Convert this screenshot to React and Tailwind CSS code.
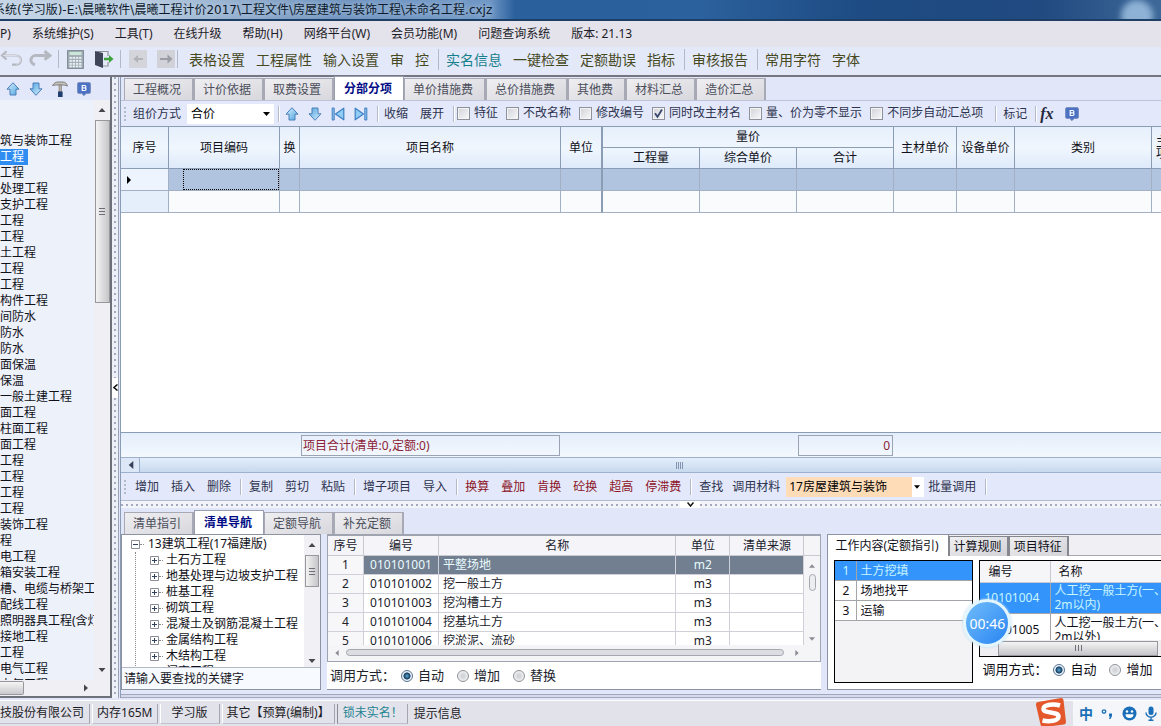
import React from "react";

const TREE = [
  "筑与装饰工程", "工程", "工程", "处理工程", "支护工程", "工程", "工程", "土工程", "工程", "工程",
  "构件工程", "间防水", "防水", "防水", "面保温", "保温", "一般土建工程", "面工程", "柱面工程", "面工程",
  "工程", "工程", "工程", "工程", "装饰工程", "程", "电工程", "箱安装工程", "槽、电缆与桥架工程", "配线工程",
  "照明器具工程(含灯", "接地工程", "工程", "电气工程", "电气工程",
];

const NAV = ["土石方工程", "地基处理与边坡支护工程", "桩基工程", "砌筑工程", "混凝土及钢筋混凝土工程", "金属结构工程", "木结构工程", "门窗工程"];

const LIST = [
  ["1", "010101001", "平整场地", "m2"],
  ["2", "010101002", "挖一般土方", "m3"],
  ["3", "010101003", "挖沟槽土方", "m3"],
  ["4", "010101004", "挖基坑土方", "m3"],
  ["5", "010101006", "挖淤泥、流砂", "m3"],
];

function Sep() {
  return <span className="h-4 w-px shrink-0 bg-[#b4b9c9] shadow-[1px_0_0_#ffffff]" />;
}

function Grip() {
  return (
    <span className="flex shrink-0 flex-col gap-0.5">
      <i className="size-0.5 bg-[#b3b9cd]" />
      <i className="size-0.5 bg-[#b3b9cd]" />
      <i className="size-0.5 bg-[#b3b9cd]" />
      <i className="size-0.5 bg-[#b3b9cd]" />
    </span>
  );
}

function BlueArrow({ down }) {
  return (
    <svg viewBox="0 0 14 14" className={down ? "size-3.5 rotate-180" : "size-3.5"}>
      <defs>
        <linearGradient id="arrowFill" x1="0" y1="0" x2="1" y2="1">
          <stop offset="0" stopColor="#d8f0fd" />
          <stop offset="1" stopColor="#4fa3e0" />
        </linearGradient>
      </defs>
      <path d="M7 .7 13 7.2H10V13H4V7.2H1Z" fill="url(#arrowFill)" stroke="#4b7fb9" strokeWidth="1" strokeLinejoin="round" />
    </svg>
  );
}

function BlueEnd({ right }) {
  return (
    <svg viewBox="0 0 14 14" className={right ? "size-3.5 rotate-180" : "size-3.5"}>
      <path d="M12.8 1.2V12.8L4.5 7Z" fill="#8fcdf4" stroke="#3d7fc2" strokeWidth="1.2" strokeLinejoin="round" />
      <path d="M1.2 1h2v12h-2z" fill="#8fc6ee" stroke="#3d7fc2" strokeWidth="1" />
    </svg>
  );
}

function BadgeB() {
  return (
    <svg viewBox="0 0 14 14" className="size-3.5">
      <path d="M1.5.7h11a.8.8 0 0 1 .8.8v9a.8.8 0 0 1-.8.8H9.3L7 13.6 4.7 11.3H1.5a.8.8 0 0 1-.8-.8v-9a.8.8 0 0 1 .8-.8Z" fill="#4a72c4" stroke="#6d83b8" />
      <path d="M5.2 3.5h2.4a1.2 1.2 0 0 1 .2 2.4 1.3 1.3 0 0 1-.1 2.6H5.2Zm0 2.4h2.4" fill="none" stroke="#fff" strokeWidth="1.2" />
    </svg>
  );
}

function Caret({ className }) {
  return (
    <svg viewBox="0 0 7 4" className={className}>
      <path d="M0 0h7L3.5 4Z" fill="currentColor" />
    </svg>
  );
}

function Tabs({ items, active, label }) {
  return (
    <div role="tablist" aria-label={label} className="flex items-end pl-[3px] text-[12px]">
      {items.map((t) =>
        t === active ? (
          <button key={t} role="tab" aria-selected="true" className="h-6 border border-b-0 border-[#9a9fb0] bg-white pr-[11px] pl-[9px] font-bold text-[#000b85]">
            {t}
          </button>
        ) : (
          <button key={t} role="tab" aria-selected="false" className="h-[22px] border border-r-2 border-b-0 border-[#a7a9b4] bg-linear-to-br from-[#efeff2] to-[#d7d7dd] pr-[11px] pl-2 text-[#4b4e5a]">
            {t}
          </button>
        )
      )}
    </div>
  );
}

function Check({ children, checked }) {
  return (
    <label className="flex items-center gap-1">
      <input
        type="checkbox"
        defaultChecked={checked}
        className="peer size-[13px] appearance-none border border-[#8d929c] bg-linear-to-br from-[#cfd2d9] to-[#fafafa] shadow-[inset_0_0_0_1px_#f4f4f4]"
      />
      <svg viewBox="0 0 13 13" className="-ml-[17px] hidden size-[13px] peer-checked:block">
        <path d="M3 6.2 5.5 9.8 10 2.6" fill="none" stroke="#3b4a70" strokeWidth="1.8" />
      </svg>
      <span className="-mt-0.5">{children}</span>
    </label>
  );
}

function Radio({ name, children, checked }) {
  return (
    <label className="flex items-center gap-[5px]">
      <input
        type="radio"
        name={name}
        defaultChecked={checked}
        className="size-3 appearance-none rounded-full border border-[#8e9199] bg-[radial-gradient(circle,#d2d4d8_20%,#f6f6f6_80%)] checked:border-[#587490] checked:bg-[radial-gradient(circle,#5fa8cf_0%,#123a60_45%,#eaf3fa_55%)]"
      />
      {children}
    </label>
  );
}

function TitleBar() {
  return (
    <header className="relative flex h-[21px] shrink-0 items-center overflow-hidden border-b-2 border-[#1d3f66] bg-[linear-gradient(90deg,#c5d5e6_0px,#b4c8dd_150px,#6f93be_330px,#6f97c5_490px,#2a609c_515px,#2b619d_700px,#1e4b83_860px,#204a80_1040px,#3d6898_100%)]">
      <h1 className="-ml-[7px] font-['DejaVu_Sans','Noto_Sans_CJK_SC',sans-serif] text-[12px] leading-[18px] whitespace-nowrap text-[#0d1a2c] [text-shadow:0_0_6px_#d3e2f2]">
        系统(学习版)-E:\晨曦软件\晨曦工程计价2017\工程文件\房屋建筑与装饰工程\未命名工程.cxjz
      </h1>
      <span className="absolute top-0 right-2 size-8 rounded-full bg-[#a4c6e6] opacity-80 blur-[3px]" />
    </header>
  );
}

function MenuBar() {
  const items = ["P)", "系统维护(S)", "工具(T)", "在线升级", "帮助(H)", "网络平台(W)", "会员功能(M)", "问题查询系统", "版本: 21.13"];
  return (
    <nav className="flex h-[26px] shrink-0 items-center gap-[21px] overflow-hidden bg-[#e4e2eb] text-[12px] text-[#1d1d28]">
      {items.map((m) => (
        <button key={m} className="shrink-0 whitespace-nowrap">{m}</button>
      ))}
    </nav>
  );
}

function MainToolbar() {
  return (
    <div role="toolbar" className="flex h-[30px] shrink-0 items-center gap-[11px] overflow-hidden border-b-2 border-[#75767f] bg-[#e4e9fa] pb-1 text-[14px] whitespace-nowrap text-[#47491f]">
      <div className="flex w-[178px] shrink-0 items-center">
        <button aria-label="撤销" className="mr-1">
          <svg viewBox="0 0 24 18" className="h-[18px] w-6">
            <path d="M2 5.5h14a5 4.6 0 0 1 0 9.2h-4M6.5 1.2 2 5.5l4.5 4" fill="none" stroke="#b5b8c0" strokeWidth="2.2" />
            <path d="M3 5.5h13a4.6 4.2 0 0 1 0 8.6" fill="none" stroke="#e7e9ee" strokeWidth=".8" />
          </svg>
        </button>
        <button aria-label="重做">
          <svg viewBox="0 0 24 18" className="h-[18px] w-6">
            <path d="M22 5.5H9a5 4.6 0 0 0-2 9.2M16.5 1.2 22 5.5l-5.5 4" fill="none" stroke="#b5b8c0" strokeWidth="3" />
          </svg>
        </button>
        <span className="mr-2 ml-1.5 h-[18px] w-px bg-[#b4b9c9]" />
        <button aria-label="计算器">
          <svg viewBox="0 0 17 19" className="h-[19px] w-[17px]">
            <rect x=".6" y=".6" width="15.8" height="17.8" fill="#a3adb5" stroke="#7c8893" />
            <rect x="2.5" y="2" width="12" height="3" fill="#c9e6d6" />
            <g fill="#e8f0f3">
              {[7, 10, 13, 15.5].map((y) => [2.5, 5.7, 8.9, 12.1].map((x) => <rect key={`${x}-${y}`} x={x} y={y} width="2.3" height="1.8" />))}
            </g>
          </svg>
        </button>
        <button aria-label="退出" className="ml-2.5">
          <svg viewBox="0 0 20 18" className="h-[18px] w-5">
            <path d="M3 1.5h11V6M14 12v4H9" fill="#eceef3" stroke="#8d93a1" strokeWidth="1.2" />
            <path d="M1 1 9 3v15l-8-3Z" fill="#3f4659" />
            <path d="M10 7.7h5V5l4.5 4-4.5 4v-2.7h-5Z" fill="#3da23d" />
          </svg>
        </button>
        <span className="mr-2 ml-1.5 h-[18px] w-px bg-[#b4b9c9]" />
        <button aria-label="后退">
          <svg viewBox="0 0 18 18" className="size-[18px]">
            <path d="M0 0h18v18H0z" fill="#d3d5da" />
            <path d="M5 9h9" stroke="#b0b3ba" strokeWidth="2" />
            <path d="M9 5 4.500 9 9 13Z" fill="#b0b3ba" />
          </svg>
        </button>
        <button aria-label="前进" className="ml-2.5">
          <svg viewBox="0 0 18 18" className="size-[18px]">
            <path d="M0 0h18v18H0z" fill="#d0d2d7" />
            <path d="M3 9h10" stroke="#9a9da5" strokeWidth="2" />
            <path d="M10.500 4.500 15.500 9l-5 4.500Z" fill="#9a9da5" />
          </svg>
        </button>
        <span className="ml-auto h-[18px] w-px bg-[#b4b9c9]" />
      </div>
      <div className="flex gap-[11px] pr-[9px]">
        <button>表格设置</button>
        <button>工程属性</button>
        <button>输入设置</button>
        <button>审</button>
        <button>控</button>
      </div>
      <div className="-ml-[11px] flex items-center gap-[11px] border-l border-[#b4b9c9] pr-[9px] pl-[7px]">
        <button className="text-[#16808c]">实名信息</button>
        <button>一键检查</button>
        <button>定额勘误</button>
        <button>指标</button>
      </div>
      <div className="-ml-[11px] border-l border-[#b4b9c9] pr-[9px] pl-[7px]">
        <button>审核报告</button>
      </div>
      <div className="-ml-[11px] flex gap-[11px] border-l border-[#b4b9c9] pl-[7px]">
        <button>常用字符</button>
        <button>字体</button>
      </div>
    </div>
  );
}

function LeftPanel() {
  return (
    <aside className="flex w-28 shrink-0 flex-col overflow-hidden border-r-2 border-b-2 border-[#6e7079] bg-[#edf1fa]">
      <div className="flex h-[23px] shrink-0 items-center gap-[9px] bg-[#e2e8f9] pl-1.5">
        <button aria-label="上移"><BlueArrow /></button>
        <button aria-label="下移"><BlueArrow down /></button>
        <button aria-label="工具">
          <svg viewBox="0 0 16 16" className="size-4">
            <path d="M.5 4.5C2 2 4 1 6 1h5c2 0 3.500 1 4.500 4L12 4H5C3.500 4 2.500 4.200.5 4.500Z" fill="#c5c3c0" stroke="#6f6b69" strokeWidth=".8" />
            <path d="M7 4h2.500v7H7Z" fill="#b9b2aa" stroke="#6b6259" strokeWidth=".5" />
            <path d="M6 10.500h4.600V16H6Z" fill="#1f3d70" />
          </svg>
        </button>
        <button aria-label="标注"><BadgeB /></button>
      </div>
      <div className="flex min-h-0 flex-1">
        <ul className="min-w-0 flex-1 overflow-hidden pt-[33px] text-[12px] leading-4 whitespace-nowrap text-[#101018]">
          {TREE.map((t, i) => (
            <li key={i} className="h-4">
              {i === 1 ? <span className="inline-block bg-[#2f8df2] pr-1 text-white">{t}</span> : t}
            </li>
          ))}
        </ul>
        <div className="flex w-4 shrink-0 flex-col items-center bg-[#f0eff3] text-[#44454d]">
          <Caret className="my-2 h-1 w-2 shrink-0 rotate-180" />
          <div className="flex h-[183px] w-[15px] flex-col items-center justify-center gap-0.5 border border-[#97979c] bg-linear-to-r from-[#f3f3f3] to-[#c6c6ca]">
            <i className="h-px w-1.5 bg-[#6d6e75]" /><i className="h-px w-1.5 bg-[#6d6e75]" /><i className="h-px w-1.5 bg-[#6d6e75]" />
          </div>
          <Caret className="mt-auto mb-2 h-1 w-2" />
        </div>
      </div>
      <div className="flex h-4 shrink-0 items-center bg-[#f0eff3] text-[#44454d]">
        <span className="h-[14px] w-6 rounded-r-xs border border-l-0 border-[#97979c] bg-linear-to-b from-[#f5f5f5] to-[#c9c9cd]" />
        <Caret className="ml-auto mr-5 h-1 w-2 -rotate-90" />
      </div>
    </aside>
  );
}

function Splitter() {
  return (
    <div className="flex w-[7px] shrink-0 flex-col items-center border-r border-[#9ba3bb] bg-[#eef0f8]">
      <span className="w-0.5 flex-1 bg-[repeating-linear-gradient(180deg,#a3aac0_0_2px,transparent_2px_6px)]" />
      <button aria-label="收起" className="flex h-5 w-full items-center justify-center bg-white">
        <svg viewBox="0 0 5 7" className="h-[7px] w-[5px]"><path d="M4.500.5 1 3.500l3.500 3" fill="none" stroke="#111" strokeWidth="1.500" /></svg>
      </button>
      <span className="w-0.5 flex-1 bg-[repeating-linear-gradient(180deg,#a3aac0_0_2px,transparent_2px_6px)]" />
    </div>
  );
}

function GridToolbar() {
  return (
    <div role="toolbar" className="flex h-[26px] shrink-0 items-center overflow-hidden border-t border-[#bcc3d8] bg-[#e3e9fa] pl-[3px] text-[12px] whitespace-nowrap text-[#2e3350] *:shrink-0">
      <Grip />
      <label htmlFor="mode" className="ml-[7px]">组价方式</label>
      <span className="relative mr-1 ml-1.5 block h-5 w-[87px]">
        <select id="mode" className="size-full appearance-none bg-white pl-1 text-[12px] text-black"><option>合价</option></select>
        <Caret className="pointer-events-none absolute top-2 right-1 h-1 w-[7px] text-black" />
      </span>
      <Sep />
      <div className="mx-1.5 flex gap-[9px] pr-[3px]">
        <button aria-label="上移"><BlueArrow /></button>
        <button aria-label="下移"><BlueArrow down /></button>
        <button aria-label="首条"><BlueEnd /></button>
        <button aria-label="末条"><BlueEnd right /></button>
      </div>
      <Sep />
      <div className="flex gap-3 pr-[9px] pl-1.5"><button>收缩</button><button>展开</button></div>
      <Sep />
      <div className="mr-3 ml-[3px] flex gap-2">
        <Check>特征</Check>
        <Check>不改名称</Check>
        <Check>修改编号</Check>
        <Check checked>同时改主材名</Check>
        <Check>量、价为零不显示</Check>
        <Check>不同步自动汇总项</Check>
      </div>
      <Sep />
      <button className="mr-2 ml-[7px]">标记</button>
      <Sep />
      <button className="mx-1 font-['Liberation_Serif',serif] text-[16px] font-bold text-[#26283c] italic">fx</button>
      <button aria-label="标注" className="ml-2"><BadgeB /></button>
    </div>
  );
}

function MainGrid() {
  const th = "border-r border-b border-[#8b9cb5] p-0 font-normal";
  const cells = Array.from({ length: 11 });
  return (
    <section className="flex min-h-0 flex-1 flex-col overflow-hidden border-t border-[#8b9cb5] bg-white">
      <div className="min-h-0 flex-1 overflow-hidden">
        <table className="w-max min-w-full table-fixed border-separate border-spacing-0 text-center text-[12px] text-[#101018]">
          <colgroup>
            <col className="w-12" /><col className="w-[111px]" /><col className="w-5" /><col className="w-[261px]" />
            <col className="w-[42px]" /><col className="w-[97px]" /><col className="w-[97px]" /><col className="w-[97px]" />
            <col className="w-[63px]" /><col className="w-[58px]" /><col className="w-[137px]" /><col className="w-10" />
          </colgroup>
          <thead className="bg-linear-to-b from-[#e6effb] via-[#f0f6fe] to-[#dde9fa]">
            <tr className="h-[21px]">
              <th rowSpan={2} className={th}>序号</th>
              <th rowSpan={2} className={th}>项目编码</th>
              <th rowSpan={2} className={th}>换</th>
              <th rowSpan={2} className={th}>项目名称</th>
              <th rowSpan={2} className="border-r-2 border-b border-[#8b9cb5] p-0 font-normal">单位</th>
              <th colSpan={3} className={th}>量价</th>
              <th rowSpan={2} className={th}>主材单价</th>
              <th rowSpan={2} className={th}>设备单价</th>
              <th rowSpan={2} className={th}>类别</th>
              <th rowSpan={2} className="border-b border-[#8b9cb5] p-0 pl-1 text-left leading-3 font-normal">主要<br />项目</th>
            </tr>
            <tr className="h-[21px]">
              <th className={th}>工程量</th>
              <th className={th}>综合单价</th>
              <th className={th}>合计</th>
            </tr>
          </thead>
          <tbody>
            <tr className="h-[22px] bg-[#b0c4e0]">
              <td className="border-r border-b border-[#a3b0c4] bg-[#edf4fe] p-0 pl-1.5">
                <svg viewBox="0 0 4 8" className="h-2 w-1"><path d="M0 0 4 4 0 8Z" fill="#000" /></svg>
              </td>
              {cells.map((_, i) => (
                <td key={i} className={i === 3 ? "border-r-2 border-b border-r-[#8b9cb5] border-b-[#a3b0c4] p-0" : "border-r border-b border-[#a3b0c4] p-0"}>
                  {i === 0 && <span className="ml-[14px] block h-[21px] border border-dotted border-black" />}
                </td>
              ))}
            </tr>
            <tr className="h-[22px] bg-[#fafbfd]">
              <td className="border-r border-b border-[#a3b0c4] bg-[#e5effc] p-0" />
              {cells.map((_, i) => (
                <td key={i} className={i === 3 ? "border-r-2 border-b border-r-[#8b9cb5] border-b-[#a3b0c4] p-0" : "border-r border-b border-[#a3b0c4] p-0"} />
              ))}
            </tr>
          </tbody>
        </table>
      </div>
      <div className="flex h-[25px] shrink-0 items-center border-t border-[#8b9cb5] bg-linear-to-b from-[#e4eefb] to-[#f4f8fe] pl-[180px] text-[12px] text-[#8c2435]">
        <output className="h-[21px] w-[259px] shrink-0 border border-[#9aa3b4] pl-px leading-[19px]">项目合计(清单:0,定额:0)</output>
        <output className="ml-[238px] h-[21px] w-[95px] shrink-0 border border-[#9aa3b4] pr-0.5 text-right leading-[19px]">0</output>
      </div>
      <div className="flex h-4 shrink-0 items-center border-y border-[#9db0cd] bg-[#dce8f8] text-[#37425a]">
        <Caret className="mr-1 ml-1.5 h-1.5 w-2 rotate-90" />
        <div className="flex h-full flex-1 items-center justify-center gap-px border-l border-[#9db0cd] bg-linear-to-b from-[#e3eefb] to-[#c8d9ef] pl-[58px]">
          <i className="h-[7px] w-px bg-[#8293ae]" /><i className="h-[7px] w-px bg-[#8293ae]" /><i className="h-[7px] w-px bg-[#8293ae]" /><i className="h-[7px] w-px bg-[#8293ae]" />
        </div>
      </div>
    </section>
  );
}

function EditToolbar() {
  return (
    <div role="toolbar" className="flex h-[27px] shrink-0 items-center overflow-hidden bg-[#e3e9fa] pl-[3px] text-[12px] whitespace-nowrap text-[#2e3350] *:shrink-0">
      <Grip />
      <div className="flex gap-3 px-[9px]"><button>增加</button><button>插入</button><button>删除</button></div>
      <Sep />
      <div className="flex gap-3 pr-[9px] pl-2"><button>复制</button><button>剪切</button><button>粘贴</button></div>
      <Sep />
      <div className="flex gap-3 pr-[9px] pl-2"><button>增子项目</button><button>导入</button></div>
      <Sep />
      <div className="flex gap-3 pr-[9px] pl-2 text-[#8d1528]">
        <button>换算</button><button>叠加</button><button>肯换</button><button>砼换</button><button>超高</button><button>停滞费</button>
      </div>
      <Sep />
      <div className="flex gap-[9px] pr-1.5 pl-2"><button>查找</button><button>调用材料</button></div>
      <span className="relative block h-5 w-[138px]">
        <select aria-label="定额库" className="size-full appearance-none border-r-12 border-white bg-[#ffdcb8] pl-[3px] text-[12px] text-black"><option>17房屋建筑与装饰</option></select>
        <Caret className="pointer-events-none absolute top-2 right-1 h-1 w-1.5 text-black" />
      </span>
      <button className="mr-[9px] ml-1">批量调用</button>
      <Sep />
    </div>
  );
}

function HSplitter() {
  return (
    <div className="flex h-2 shrink-0 items-center border-t border-[#b4bbcf] bg-[#f3f4fa]">
      <span className="h-0.5 flex-1 bg-[repeating-linear-gradient(90deg,#a3aac0_0_2px,transparent_2px_5px)]" />
      <button aria-label="收起" className="flex h-full w-5 items-center justify-center bg-white">
        <svg viewBox="0 0 7 5" className="h-[5px] w-[7px]"><path d="M.5.5 3.500 4l3-3.500" fill="none" stroke="#111" strokeWidth="1.500" /></svg>
      </button>
      <span className="h-0.5 w-[461px] bg-[repeating-linear-gradient(90deg,#a3aac0_0_2px,transparent_2px_5px)]" />
    </div>
  );
}

function Expander({ open }) {
  return (
    <svg viewBox="0 0 9 9" className="size-[9px] shrink-0">
      <path d="M.5.5h8v8h-8z" fill="#fff" stroke="#8b8e96" />
      <path d={open ? "M2 4.500h5" : "M2 4.500h5M4.500 2v5"} stroke="#30405c" />
    </svg>
  );
}

function NavTree() {
  return (
    <section className="flex w-[200px] shrink-0 flex-col border border-[#8e93a3] bg-white">
      <div className="flex min-h-0 flex-1">
        <div className="min-w-0 flex-1 overflow-hidden pt-px pl-[9px] text-[12px] leading-4 whitespace-nowrap text-[#101018]">
          <div className="flex h-4 items-center"><Expander open /><i className="mr-1 w-1 border-t border-dotted border-[#888]" />13建筑工程(17福建版)</div>
          <ul className="ml-1 border-l border-dotted border-[#888] pl-[14px]">
            {NAV.map((n) => (
              <li key={n} className="flex h-4 items-center"><Expander /><i className="mr-[3px] w-1 border-t border-dotted border-[#888]" />{n}</li>
            ))}
          </ul>
        </div>
        <div className="flex w-4 shrink-0 flex-col items-center bg-[#f1f0f4] text-[#44454d]">
          <Caret className="my-2 h-1 w-2 shrink-0 rotate-180" />
          <div className="flex h-8 w-[14px] shrink-0 flex-col items-center justify-center gap-0.5 border border-[#97979c] bg-linear-to-r from-[#f3f3f3] to-[#c6c6ca]">
            <i className="h-px w-1.5 bg-[#6d6e75]" /><i className="h-px w-1.5 bg-[#6d6e75]" /><i className="h-px w-1.5 bg-[#6d6e75]" />
          </div>
          <Caret className="mt-auto mb-1 h-1 w-2" />
        </div>
      </div>
      <input aria-label="查找" placeholder="请输入要查找的关键字" className="h-[22px] w-full shrink-0 border-t border-[#b4b9c8] bg-[#f7faff] px-0.5 text-[12px] placeholder:text-[#16161e]" />
    </section>
  );
}

function ListPanel() {
  const th = "border-r border-b border-[#c9c9d2] p-0 font-normal";
  const td = "border-r border-b border-[#cfd0d8] p-0";
  return (
    <section className="flex min-w-0 flex-[495] flex-col border-b border-[#8e93a3] bg-white text-[12px] text-[#20222c]">
      <div className="flex h-32 shrink-0 flex-col border border-t-2 border-[#a0a3b0] bg-[#f5f5f8]">
        <div className="min-h-0 flex-1 overflow-hidden">
          <div className="flex">
            <table className="min-w-0 flex-1 table-fixed border-separate border-spacing-0 bg-white text-center">
              <colgroup><col className="w-9" /><col className="w-[75px]" /><col /><col className="w-[54px]" /><col className="w-[74px]" /></colgroup>
              <thead className="bg-[#f5f4f8]">
                <tr className="h-5"><th className={th}>序号</th><th className={th}>编号</th><th className={th}>名称</th><th className={th}>单位</th><th className={th}>清单来源</th></tr>
              </thead>
              <tbody>
                {LIST.map((r, i) => (
                  <tr key={r[0]} className={i === 0 ? "h-[19px] bg-[#727f90] text-[#e8fbff]" : "h-[19px]"}>
                    <td className="border-r border-b border-[#cfd0d8] bg-[#f7f7fa] p-0 text-[#20222c]">{r[0]}</td>
                    <td className={td}>{r[1]}</td>
                    <td className="border-r border-b border-[#cfd0d8] p-0 pl-1 text-left">{r[2]}</td>
                    <td className={td}>{r[3]}</td>
                    <td className={td} />
                  </tr>
                ))}
              </tbody>
            </table>
            <div className="flex w-4 flex-col items-center text-[#8a8c94]">
              <span className="h-5 w-full border-b border-[#c9c9d2]" />
              <Caret className="mt-2 h-1 w-1.5 rotate-180" />
              <span className="mt-1.5 h-[17px] w-[7px] rounded-full border border-[#a5a7b0] bg-[#ececf1]" />
              <Caret className="mt-[46px] h-1 w-1.5" />
            </div>
          </div>
        </div>
        <div className="flex h-4 shrink-0 items-center gap-1.5 pr-4 pb-px pl-1.5 text-[#8a8c94]">
          <Caret className="h-1 w-1.5 rotate-90" />
          <span className="h-[7px] flex-1 rounded-full border border-[#a5a7b0] bg-[#dcdce2]" />
          <Caret className="mx-1 h-1 w-1.5 -rotate-90" />
        </div>
      </div>
      <fieldset aria-label="调用方式" className="flex flex-1 items-center pl-[3px] text-[13px]">
        <span className="mr-1.5">调用方式：</span>
        <div className="flex gap-[13px]">
          <Radio name="list" checked>自动</Radio>
          <Radio name="list">增加</Radio>
          <Radio name="list">替换</Radio>
        </div>
      </fieldset>
    </section>
  );
}

function GuidePanel() {
  const tab = "h-5 border border-r-2 border-b-0 border-[#85878f] bg-linear-to-br from-[#f0f0f2] to-[#d3d3d8] pr-[5px] pl-1";
  const work = ["土方挖填", "场地找平", "运输"];
  return (
    <section className="relative flex min-w-0 flex-[333] flex-col border border-r-0 border-[#8e93a3] bg-white text-[12px] text-[#101018]">
      <div role="tablist" aria-label="定额指引" className="flex h-[21px] shrink-0 items-end bg-[#efeff4] whitespace-nowrap">
        <button role="tab" aria-selected="true" className="h-[21px] border-r border-[#85878f] bg-white pr-[9px] pl-[7px]">工作内容(定额指引)</button>
        <button role="tab" aria-selected="false" className={tab}>计算规则</button>
        <button role="tab" aria-selected="false" className={tab}>项目特征</button>
        <span className="flex-1 self-stretch border-b border-[#a5a7b0]" />
      </div>
      <div className="flex min-h-0 flex-1 gap-1.5 overflow-hidden pt-1 pb-1.5 pl-1.5">
        <div className="w-[139px] shrink-0 border border-black bg-[#f3f3f5]">
          <table className="w-full border-separate border-spacing-0 bg-white">
            <tbody>
              {work.map((w, i) => (
                <tr key={w} className={i === 0 ? "h-5 bg-[#3394fb] text-[#c9f6ff]" : "h-5"}>
                  <td className="w-[22px] border-r border-b border-[#a3a5ab] p-0 text-center">{i + 1}</td>
                  <td className="border-b border-[#a3a5ab] p-0 pl-[3px]">{w}</td>
                </tr>
              ))}
            </tbody>
          </table>
        </div>
        <div className="flex min-w-0 flex-1 flex-col">
          <div className="flex h-[97px] shrink-0 flex-col overflow-hidden border border-r-0 border-black">
            <div className="min-h-0 flex-1 overflow-hidden">
              <table className="w-full table-fixed border-separate border-spacing-0 text-left whitespace-nowrap">
                <colgroup><col className="w-[71px]" /><col /></colgroup>
                <thead className="bg-[#f6f6f8]">
                  <tr className="h-[22px]">
                    <th className="border-r border-b border-[#c9c9d2] p-0 pl-2 font-normal">编号</th>
                    <th className="border-b border-[#c9c9d2] p-0 pl-[7px] font-normal">名称</th>
                  </tr>
                </thead>
                <tbody className="leading-[14px]">
                  <tr className="h-[31px] bg-[#3394fb] text-[#c9f6ff]">
                    <td className="border-r border-b border-[#a3a5ab] p-0 pl-1">10101004</td>
                    <td className="border-b border-[#a3a5ab] p-0 pl-[3px]">人工挖一般土方(一、<br />2m以内)</td>
                  </tr>
                  <tr className="h-[31px]">
                    <td className="border-r border-[#a3a5ab] p-0 pl-1">10101005</td>
                    <td className="p-0 pl-[3px]">人工挖一般土方(一、<br />2m以外)</td>
                  </tr>
                </tbody>
              </table>
            </div>
            <div className="flex h-4 shrink-0 items-center bg-[#efeff2] pr-[3px] pl-[18px]">
              <span className="flex h-[15px] flex-1 items-center justify-center gap-0.5 border border-[#97979c] bg-linear-to-b from-[#f3f3f3] to-[#c6c6ca]">
                <i className="h-1.5 w-px bg-[#6d6e75]" /><i className="h-1.5 w-px bg-[#6d6e75]" /><i className="h-1.5 w-px bg-[#6d6e75]" />
              </span>
            </div>
          </div>
          <fieldset aria-label="调用方式" className="flex flex-1 items-center overflow-hidden pl-[3px] text-[13px] whitespace-nowrap">
            <span className="mr-1.5">调用方式：</span>
            <div className="flex gap-[13px]">
              <Radio name="guide" checked>自动</Radio>
              <Radio name="guide">增加</Radio>
            </div>
          </fieldset>
        </div>
      </div>
      <time className="absolute top-16 left-[135px] flex size-12 items-center justify-center rounded-full border-3 border-[#e3f6fd] bg-linear-to-br from-[#6fbcfa] to-[#2784f2] text-[14px] text-white shadow-[0_0_3px_#b8d7ea]">00:46</time>
    </section>
  );
}

function StatusBar() {
  const cell = "flex h-5 items-center border-r border-[#a4a5b0] border-b border-b-[#c0c1ca] whitespace-nowrap";
  return (
    <footer className="relative flex h-[26px] shrink-0 items-center gap-0.5 border-t border-white bg-[#e2e2ea] text-[12px] text-[#1c1c26]">
      <span className={`${cell} pr-[5px]`}>技股份有限公司</span>
      <span className={`${cell} border-l border-l-white pr-1 pl-1`}>内存165M</span>
      <span className={`${cell} border-l border-l-white px-[11px]`}>学习版</span>
      <span className={`${cell} border-l border-l-white pr-1 pl-1`}>其它【预算(编制)】</span>
      <span className={`${cell} border-l border-l-[#8a8b96] pr-1 pl-[5px] text-[#1d8491]`}>锁未实名！</span>
      <span className="pl-1">提示信息</span>
      <div className="ml-auto flex w-[88px] items-center justify-between self-stretch bg-[#f5f6f9] pr-1 pl-1.5 text-[#1b6fb8]">
        <span className="text-[14px] font-bold">中</span>
        <svg viewBox="0 0 12 12" className="size-3"><circle cx="3" cy="3.500" r="1.700" fill="none" stroke="currentColor" strokeWidth="1.300" /><path d="M8 5.500h3V8L9.500 11H8l.9-2.500H8Z" fill="currentColor" /></svg>
        <svg viewBox="0 0 15 15" className="size-[15px]"><circle cx="7.500" cy="7.500" r="7" fill="currentColor" /><circle cx="5" cy="5.500" r="1.200" fill="#fff" /><circle cx="10" cy="5.500" r="1.200" fill="#fff" /><path d="M3.500 8.300h8a4 3.800 0 0 1-8 0Z" fill="#fff" /></svg>
        <svg viewBox="0 0 12 15" className="h-[15px] w-3"><rect x="3.500" y=".5" width="5" height="8.500" rx="2.500" fill="currentColor" /><path d="M1 6.500a5 4.700 0 0 0 10 0M6 11v3M3.500 14.200h5" fill="none" stroke="currentColor" strokeWidth="1.400" /></svg>
      </div>
      <svg viewBox="0 0 32 30" className="absolute -top-1 right-[94px] h-[30px] w-8">
        <path d="M3 5 26 1q2-.2 2.500 2L31 25q0 2-2 2.500L9 30q-3 0-3.500-2.500L1 8q-.5-2.500 2-3Z" fill="#e4572b" />
        <path d="M25 8.500C19 6.500 8.500 7.500 8.500 12c0 5 15 2 15 7.500 0 4.500-9 5.500-16 4" fill="none" stroke="#fff" strokeWidth="4.500" />
      </svg>
    </footer>
  );
}

export default function App() {
  return (
    <div className="flex h-screen min-h-[640px] flex-col overflow-hidden bg-[#e1e7f9] font-['Noto_Sans','Noto_Sans_CJK_SC',sans-serif]">
      <TitleBar />
      <MenuBar />
      <MainToolbar />
      <div className="flex min-h-0 flex-1 pb-0.5">
        <LeftPanel />
        <Splitter />
        <main className="ml-px flex min-w-0 flex-1 flex-col border-l border-[#8b9cb5]">
          <div className="flex h-[23px] shrink-0 items-end">
            <Tabs
              label="工程"
              active="分部分项"
              items={["工程概况", "计价依据", "取费设置", "分部分项", "单价措施费", "总价措施费", "其他费", "材料汇总", "造价汇总"]}
            />
          </div>
          <GridToolbar />
          <MainGrid />
          <EditToolbar />
          <HSplitter />
          <div className="flex h-[26px] shrink-0 items-end">
            <Tabs label="清单" active="清单导航" items={["清单指引", "清单导航", "定额导航", "补充定额"]} />
          </div>
          <div className="flex h-[156px] shrink-0 gap-1.5">
            <NavTree />
            <ListPanel />
            <GuidePanel />
          </div>
          <div className="mt-1 h-1 shrink-0 border-y border-[#a2a7bb] bg-[#d5dbed]" />
        </main>
      </div>
      <StatusBar />
    </div>
  );
}
